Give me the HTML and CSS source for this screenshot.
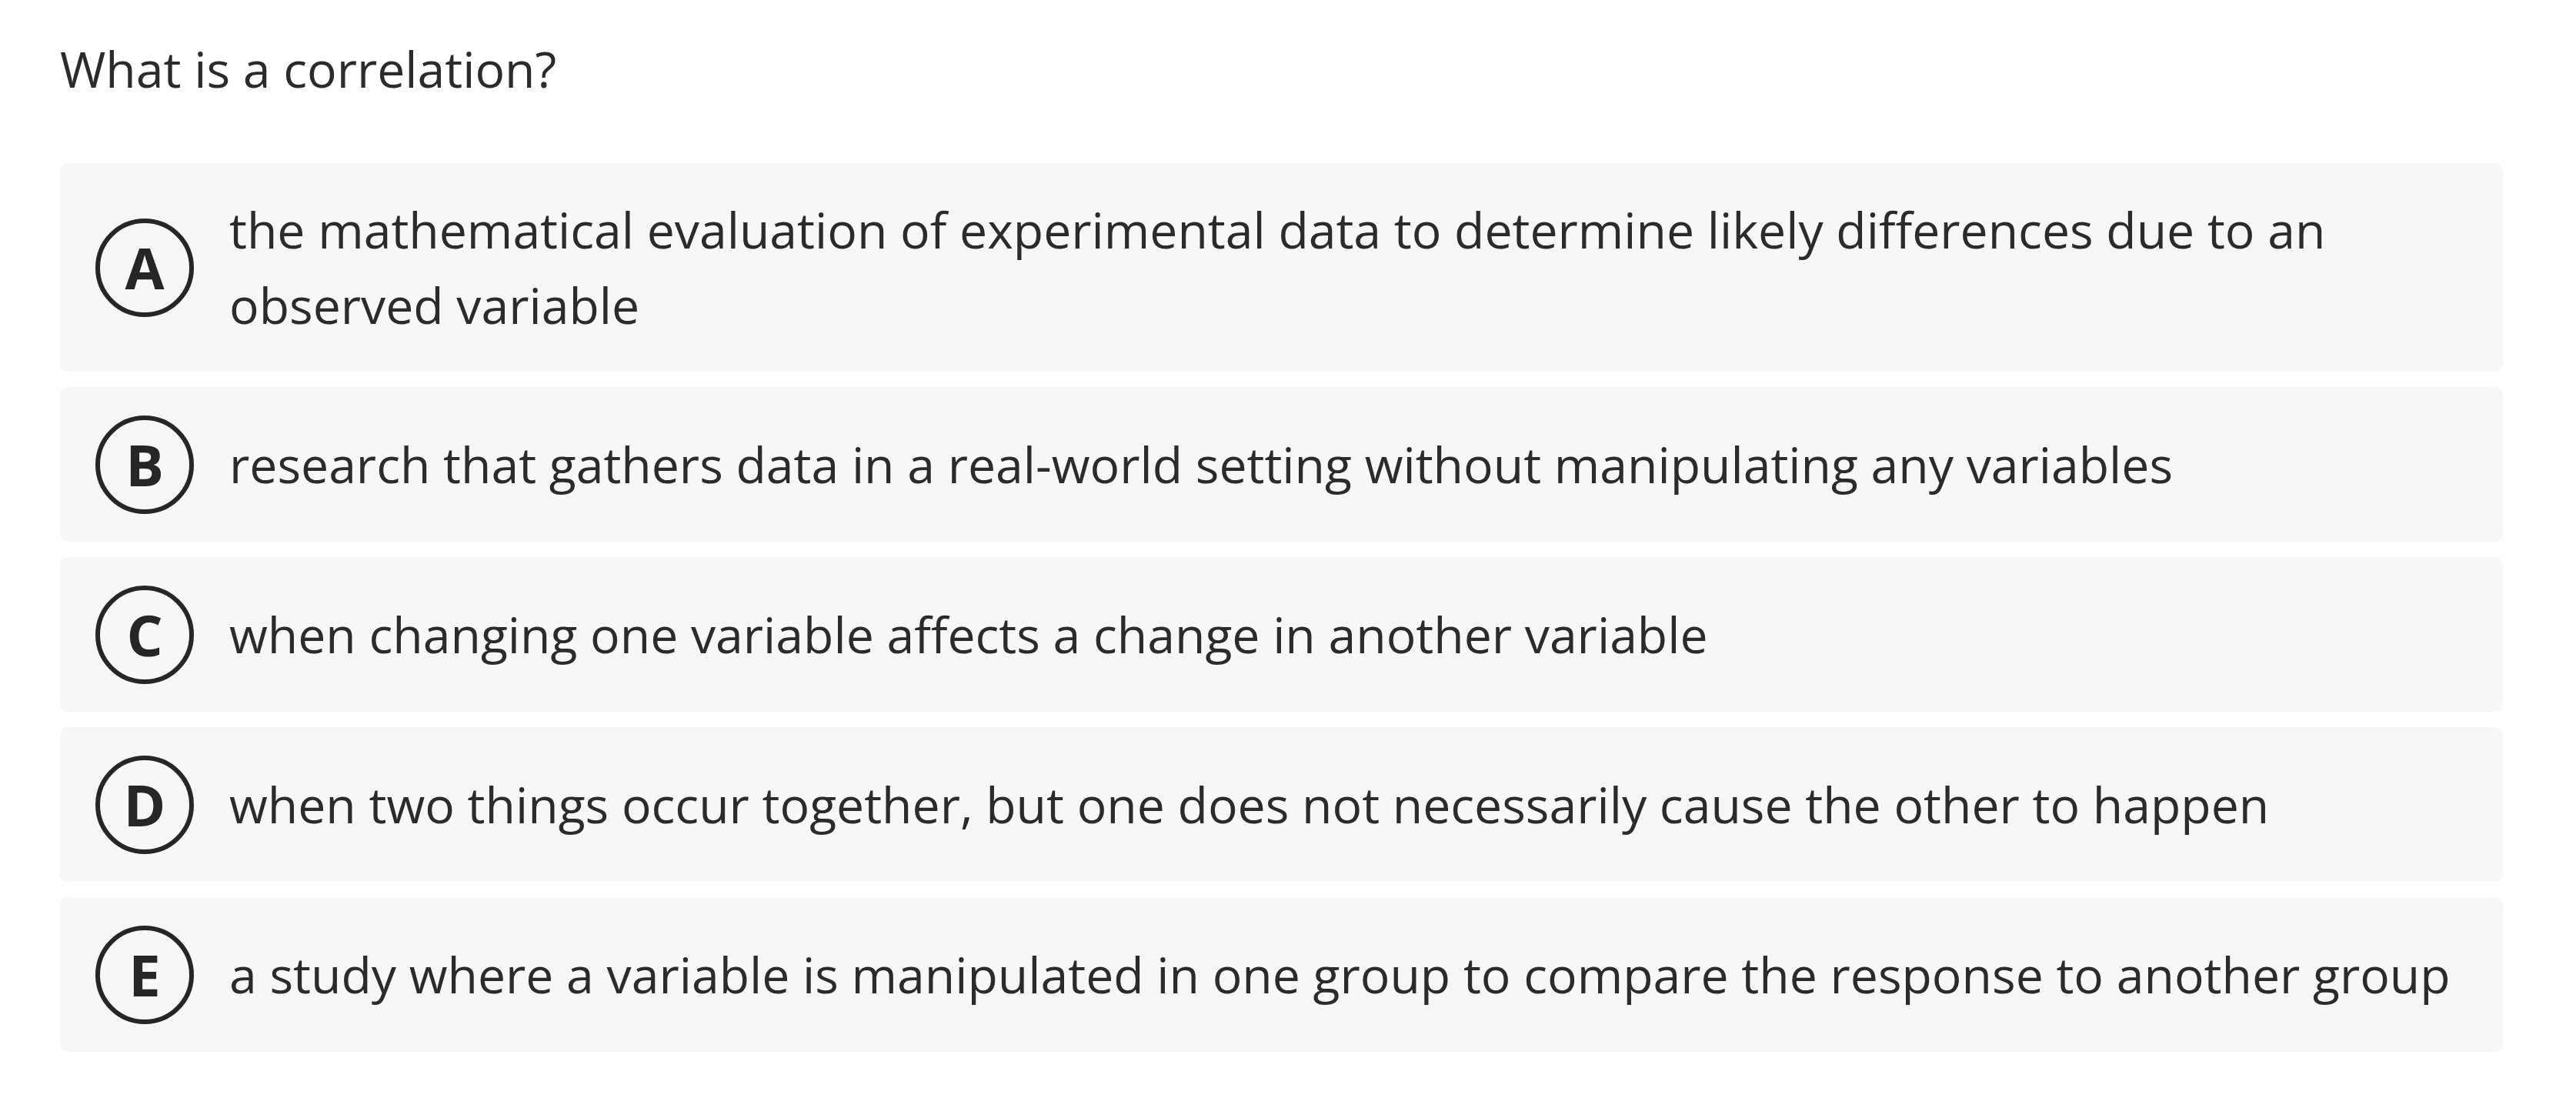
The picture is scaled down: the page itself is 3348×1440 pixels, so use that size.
FILE: index.html
```html
<!DOCTYPE html>
<html lang="en">
<head>
<meta charset="utf-8">
<title>What is a correlation?</title>
<link rel="stylesheet" href="styles.css">
</head>
<body>
<main class="question">
  <h1 class="question-title">What is a correlation?</h1>
  <ul class="options">
    <li class="option">
      <span class="option-letter">A</span>
      <span class="option-text">the mathematical evaluation of experimental data to determine likely differences due to an observed variable</span>
    </li>
    <li class="option">
      <span class="option-letter">B</span>
      <span class="option-text">research that gathers data in a real-world setting without manipulating any variables</span>
    </li>
    <li class="option">
      <span class="option-letter">C</span>
      <span class="option-text">when changing one variable affects a change in another variable</span>
    </li>
    <li class="option">
      <span class="option-letter">D</span>
      <span class="option-text">when two things occur together, but one does not necessarily cause the other to happen</span>
    </li>
    <li class="option">
      <span class="option-letter">E</span>
      <span class="option-text">a study where a variable is manipulated in one group to compare the response to another group</span>
    </li>
  </ul>
</main>
</body>
</html>
```

FILE: styles.css
```css
html, body {
  margin: 0;
  padding: 0;
  background: #ffffff;
}

body {
  font-family: "Open Sans", "Noto Sans", "Liberation Sans", sans-serif;
  color: #2b2b2b;
}

.question {
  padding: 40px 95px 0 78px;
}

.question-title {
  margin: 0 0 74px 0;
  font-size: 64.3px;
  line-height: 98px;
  font-weight: 400;
  color: #2b2b2b;
}

.options {
  list-style: none;
  margin: 0;
  padding: 0;
  display: flex;
  flex-direction: column;
  gap: 20px;
}

.option {
  display: flex;
  align-items: center;
  gap: 46px;
  min-height: 135px;
  padding: 33px 40px 33px 46px;
  background: #f7f7f7;
  border-radius: 10px;
}

.option-letter {
  flex: 0 0 auto;
  box-sizing: border-box;
  width: 128px;
  height: 128px;
  border: 6.5px solid #262626;
  border-radius: 50%;
  display: flex;
  align-items: center;
  justify-content: center;
  font-size: 74px;
  line-height: 1;
  font-weight: 700;
  color: #262626;
}

.option-text {
  flex: 1 1 auto;
  font-size: 64.3px;
  line-height: 98px;
  padding-top: 4px;
  padding-bottom: 5px;
  color: #2b2b2b;
}
```
